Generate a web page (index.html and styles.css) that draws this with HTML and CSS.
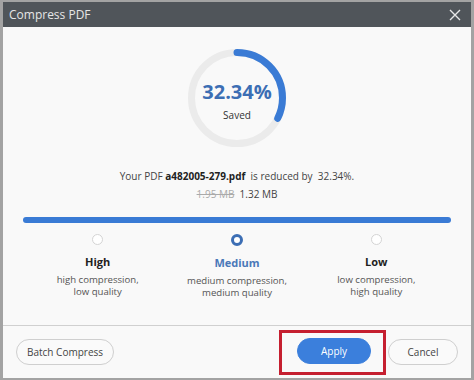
FILE: index.html
```html
<!DOCTYPE html>
<html lang="en">
<head>
    <meta charset="UTF-8">
    <title>Compress PDF</title>
    <link rel="stylesheet" href="styles.css">
</head>
<body>
    <div class="window">
        <div class="titlebar">
            <span class="title">Compress PDF</span>
            <svg class="close" width="12" height="12" viewBox="0 0 12 12">
                <path d="M1 1L11 11M11 1L1 11" stroke="#e8e8e8" stroke-width="1.4" fill="none"/>
            </svg>
        </div>

        <div class="content">
            <div class="gauge">
                <svg width="100" height="100" viewBox="0 0 100 100">
                    <circle cx="50" cy="50" r="45.5" stroke="#ebebeb" stroke-width="7" fill="none"/>
                    <circle cx="50" cy="50" r="45.5" stroke="#3a7bd5" stroke-width="7" fill="none"
                            stroke-linecap="round" stroke-dasharray="92.4 400"
                            transform="rotate(-90 50 50)"/>
                </svg>
                <div class="gauge-text">
                    <div class="percent">32.34%</div>
                    <div class="saved">Saved</div>
                </div>
            </div>

            <p class="summary">Your PDF <b>a482005-279.pdf</b>&nbsp; is reduced by &nbsp;32.34%.</p>
            <p class="sizes"><s>1.95 MB</s>&nbsp; 1.32 MB</p>

            <div class="bar"></div>

            <div class="options">
                <div class="option">
                    <span class="radio"></span>
                    <div class="name">High</div>
                    <div class="desc">high compression,<br>low quality</div>
                </div>
                <div class="option selected">
                    <span class="radio"></span>
                    <div class="name">Medium</div>
                    <div class="desc">medium compression,<br>medium quality</div>
                </div>
                <div class="option">
                    <span class="radio"></span>
                    <div class="name">Low</div>
                    <div class="desc">low compression,<br>high quality</div>
                </div>
            </div>
        </div>

        <div class="footer">
            <button class="btn">Batch Compress</button>
            <div class="actions">
                <div class="highlight">
                    <button class="btn primary">Apply</button>
                </div>
                <button class="btn cancel">Cancel</button>
            </div>
        </div>
    </div>
</body>
</html>
```

FILE: styles.css
```css
body {
    margin: 0;
    background: #a3a3a3;
    font-family: "Open Sans", "Noto Sans", sans-serif;
    color: #333;
}
.window {
    margin: 2px 3px 2px 3px;
    height: 376px;
    background: #f9f9f9;
    display: flex;
    flex-direction: column;
}
.titlebar {
    height: 25px;
    background: #50555a;
    display: flex;
    align-items: center;
    justify-content: space-between;
    padding: 0 10px 0 6px;
}
.title {
    color: #e6e6e6;
    font-size: 12px;
}
.content {
    flex: 1;
    display: flex;
    flex-direction: column;
    align-items: center;
    padding-top: 21px;
}
.gauge {
    display: grid;
}
.gauge svg,
.gauge-text {
    grid-area: 1 / 1;
}
.gauge-text {
    display: flex;
    flex-direction: column;
    align-items: center;
    justify-content: center;
    padding-top: 4px;
}
.percent {
    font-size: 20px;
    font-weight: 700;
    color: #3c6eb4;
    line-height: 26px;
}
.saved {
    font-size: 10px;
    color: #333;
    margin-top: 3px;
}
.summary {
    margin: 20px 0 0;
    font-size: 10px;
    line-height: 16px;
    color: #444;
}
.summary b {
    color: #222;
}
.sizes {
    margin: 2px 0 0;
    font-size: 10px;
    line-height: 16px;
    color: #444;
}
.sizes s {
    color: #aaa;
}
.bar {
    align-self: stretch;
    margin: 15px 20px 0;
    height: 6px;
    border-radius: 3px;
    background: #3a7bd5;
}
.options {
    align-self: stretch;
    display: grid;
    grid-template-columns: repeat(3, 1fr);
    padding: 0 25px;
    margin-top: 11px;
}
.option {
    display: flex;
    flex-direction: column;
    align-items: center;
}
.radio {
    width: 9px;
    height: 9px;
    border: 1px solid #d4d4d4;
    border-radius: 50%;
    background: #fff;
}
.selected .radio {
    width: 6px;
    height: 6px;
    border: 3px solid #3c6eb4;
}
.name {
    margin-top: 9px;
    font-size: 11px;
    line-height: 15px;
    font-weight: 700;
    color: #222;
}
.selected .name {
    color: #4a78b8;
}
.desc {
    margin-top: 5px;
    font-size: 9.6px;
    line-height: 12px;
    color: #555;
    text-align: center;
}
.footer {
    height: 52px;
    border-top: 1px solid #d0d0d0;
    display: flex;
    align-items: center;
    justify-content: space-between;
    padding: 0 13px;
}
.actions {
    display: flex;
    align-items: center;
}
.btn {
    font-family: "Open Sans", "Noto Sans", sans-serif;
    height: 26px;
    border-radius: 13px;
    border: 1px solid #cfcfcf;
    background: #fafafa;
    color: #444;
    font-size: 10px;
    padding: 0 10px;
}
.highlight {
    border: 3px solid #c51f30;
    padding: 5px 12px 8px 15px;
}
.primary {
    width: 74px;
    background: #3b7fdc;
    border-color: #3b7fdc;
    color: #fff;
}
.cancel {
    width: 70px;
    margin-left: 2px;
}
```
